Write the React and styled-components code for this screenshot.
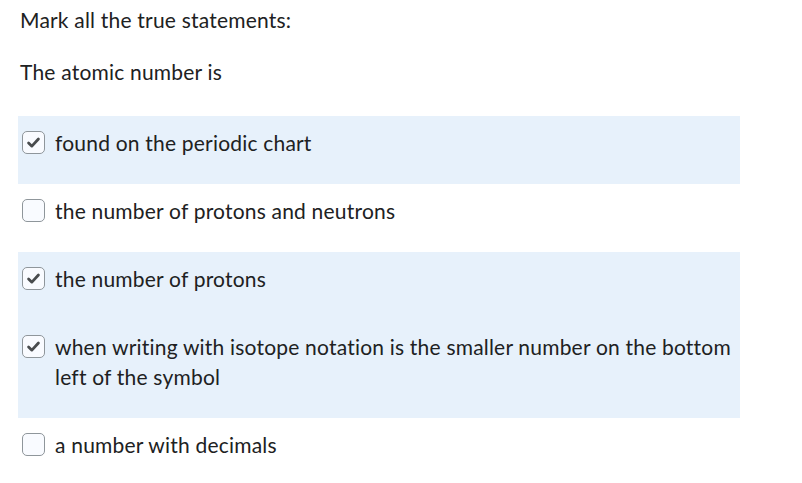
import styled, { createGlobalStyle } from "styled-components";

const GlobalStyle = createGlobalStyle`
  body {
    margin: 0;
    background: #fff;
    font-family: Lato, "Open Sans", sans-serif;
    color: #202122;
  }
`;

const Container = styled.div`
  padding: 5px 0 0 18px;
  width: 722px;
`;

const Text = styled.p`
  margin: 0 0 0 2px;
  font-size: 21px;
  line-height: 30px;
  letter-spacing: 0.2px;
`;

const Prompt = styled(Text)`
  margin-top: 22px;
  margin-bottom: 29px;
`;

const Options = styled.div`
  display: flex;
  flex-direction: column;
`;

const Option = styled.label`
  display: flex;
  align-items: flex-start;
  gap: 10px;
  padding: 12px 4px 26px 4px;
  background: ${(p) => (p.$selected ? "#e7f1fb" : "transparent")};
  font-size: 21px;
  line-height: 30px;
  letter-spacing: 0.2px;
  cursor: pointer;
`;

const Box = styled.span`
  flex: none;
  box-sizing: border-box;
  width: 23px;
  height: 23px;
  margin-top: 3px;
  border: 1px solid #8f969b;
  border-radius: 5px;
  background: #f9fbff;
  display: flex;
  align-items: center;
  justify-content: center;
`;

const Check = () => (
  <svg width="15" height="15" viewBox="0 0 14 14">
    <path
      d="M2.4 7.4 L5.5 10.4 L11.6 3.7"
      fill="none"
      stroke="#494c4e"
      strokeWidth="2.6"
      strokeLinecap="round"
      strokeLinejoin="round"
    />
  </svg>
);

const options = [
  { text: "found on the periodic chart", checked: true },
  { text: "the number of protons and neutrons", checked: false },
  { text: "the number of protons", checked: true },
  {
    text: "when writing with isotope notation is the smaller number on the bottom left of the symbol",
    checked: true,
  },
  { text: "a number with decimals", checked: false },
];

export default function App() {
  return (
    <>
      <GlobalStyle />
      <Container>
        <Text>Mark all the true statements:</Text>
        <Prompt>The atomic number is</Prompt>
        <Options>
          {options.map((o) => (
            <Option key={o.text} $selected={o.checked}>
              <Box>{o.checked && <Check />}</Box>
              <span>{o.text}</span>
            </Option>
          ))}
        </Options>
      </Container>
    </>
  );
}
